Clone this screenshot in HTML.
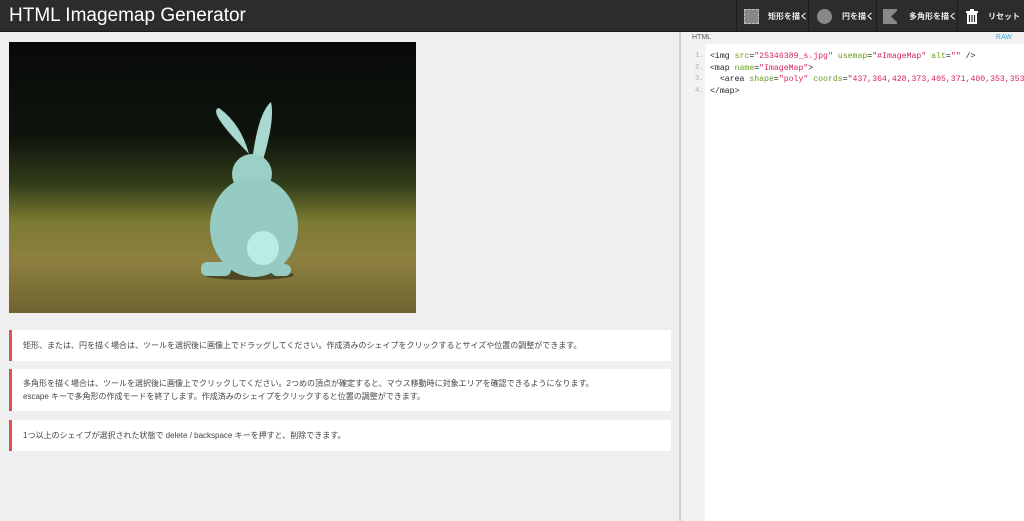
<!DOCTYPE html>
<html><head><meta charset="utf-8"><style>
*{margin:0;padding:0;box-sizing:border-box}
body{width:1024px;height:521px;overflow:hidden;background:#efefef;font-family:"Liberation Sans","Noto Sans CJK JP",sans-serif;position:relative}
.hd{position:absolute;left:0;top:0;width:1024px;height:32px;background:#2c2c2c;border-bottom:1px solid #1a1a1a}
.hd h1{position:absolute;left:9px;top:5px;font-size:19px;font-weight:normal;color:#fff}
.btn{position:absolute;top:0;height:32px;border-left:1px solid #1c1c1c;color:#eee;font-size:8px;font-weight:bold;display:flex;align-items:center;white-space:nowrap}
.left{position:absolute;left:0;top:32px;width:681px;height:489px;background:#efefef;border-right:2px solid #cfcfcf}
.img{position:absolute;left:9px;top:42px;width:407px;height:271px;overflow:hidden;background:linear-gradient(180deg,#080a08 0%,#0f150d 35%,#2f3c18 52%,#7b7a32 66%,#8d8040 80%,#6f6430 100%)}
.box{position:absolute;left:9px;width:662px;background:#fff;border-left:3px solid #d9534f;font-size:8px;color:#444;padding-left:11px;line-height:13px}
.rt{position:absolute;left:683px;top:32px;width:341px;height:489px;background:#fff;overflow:hidden}
.rbar{position:absolute;left:0;top:0;width:341px;height:12px;background:#f2f2f2;font-size:7px;color:#555}
.gut{position:absolute;left:0;top:12px;width:22px;height:477px;background:#f2f2f2}
.code{position:absolute;left:27px;top:19px;font-family:"Liberation Mono",monospace;font-size:8.2px;line-height:11.5px;color:#222;white-space:pre}
.ln{position:absolute;left:12px;top:19px;font-family:"Liberation Mono",monospace;font-size:7px;line-height:11.5px;color:#aaa}
.a{color:#6a9a1f}.s{color:#d6245a}
</style></head><body>
<div class="hd"><h1>HTML Imagemap Generator</h1>
<div class="btn" style="left:736px;width:72px"><span style="display:inline-block;width:15px;height:15px;background:#888;border:1px dashed #bbb;margin:0 9px 0 7px"></span>矩形を描く</div>
<div class="btn" style="left:808px;width:68px"><span style="display:inline-block;width:15px;height:15px;background:#888;border-radius:50%;margin:0 10px 0 8px"></span>円を描く</div>
<div class="btn" style="left:876px;width:81px"><svg width="16" height="15" style="margin:0 12px 0 6px"><path d="M0 0H16L8 7.5L16 15H0Z" fill="#888"/></svg>多角形を描く</div>
<div class="btn" style="left:957px;width:67px"><svg width="12" height="15" style="margin:0 10px 0 8px"><path d="M0 2H12V4H0ZM4 0H8V2H4ZM1 4H11V15H1Z" fill="#fff"/><path d="M3.5 6V13M6 6V13M8.5 6V13" stroke="#2c2c2c" stroke-width="1.2"/></svg>リセット</div>
</div>
<div class="left"></div>
<div class="img">
<svg width="407" height="271"><ellipse cx="240" cy="233" rx="45" ry="5" fill="#2a2a14" opacity=".6"/>
<path d="M224 95 Q200 68 210 66 Q232 82 240 112 Z" fill="#a9d8d0"/><path d="M244 112 Q250 70 262 60 Q266 78 254 118Z" fill="#a9d8d0"/>
<ellipse cx="243" cy="132" rx="20" ry="20" fill="#9ccfc6"/><ellipse cx="245" cy="185" rx="44" ry="50" fill="#95cbc2"/>
<ellipse cx="254" cy="206" rx="16" ry="17" fill="#b7ede5"/><rect x="192" y="220" width="30" height="14" rx="6" fill="#95cbc2"/><rect x="262" y="222" width="20" height="12" rx="6" fill="#95cbc2"/></svg></div>
<div class="box" style="top:330px;height:31px;padding-top:9px">矩形、または、円を描く場合は、ツールを選択後に画像上でドラッグしてください。作成済みのシェイプをクリックするとサイズや位置の調整ができます。</div>
<div class="box" style="top:369px;height:42px;padding-top:8px">多角形を描く場合は、ツールを選択後に画像上でクリックしてください。2つめの頂点が確定すると、マウス移動時に対象エリアを確認できるようになります。<br>escape キーで多角形の作成モードを終了します。作成済みのシェイプをクリックすると位置の調整ができます。</div>
<div class="box" style="top:420px;height:31px;padding-top:9px">1つ以上のシェイプが選択された状態で delete / backspace キーを押すと、削除できます。</div>
<div class="rt"><div class="rbar"><span style="position:absolute;left:9px;top:2px">HTML</span><span style="position:absolute;right:12px;top:2px;color:#3aa6d8">RAW</span></div>
<div class="gut"></div>
<div class="ln">1.<br>2.<br>3.<br>4.</div>
<div class="code">&lt;img <span class="a">src</span>=<span class="s">"25346389_s.jpg"</span> <span class="a">usemap</span>=<span class="s">"#ImageMap"</span> <span class="a">alt</span>=<span class="s">""</span> /&gt;
&lt;map <span class="a">name</span>=<span class="s">"ImageMap"</span>&gt;
  &lt;area <span class="a">shape</span>=<span class="s">"poly"</span> <span class="a">coords</span>=<span class="s">"437,364,428,373,405,371,400,353,353,346</span>
&lt;/map&gt;</div>
</div>
</body></html>
